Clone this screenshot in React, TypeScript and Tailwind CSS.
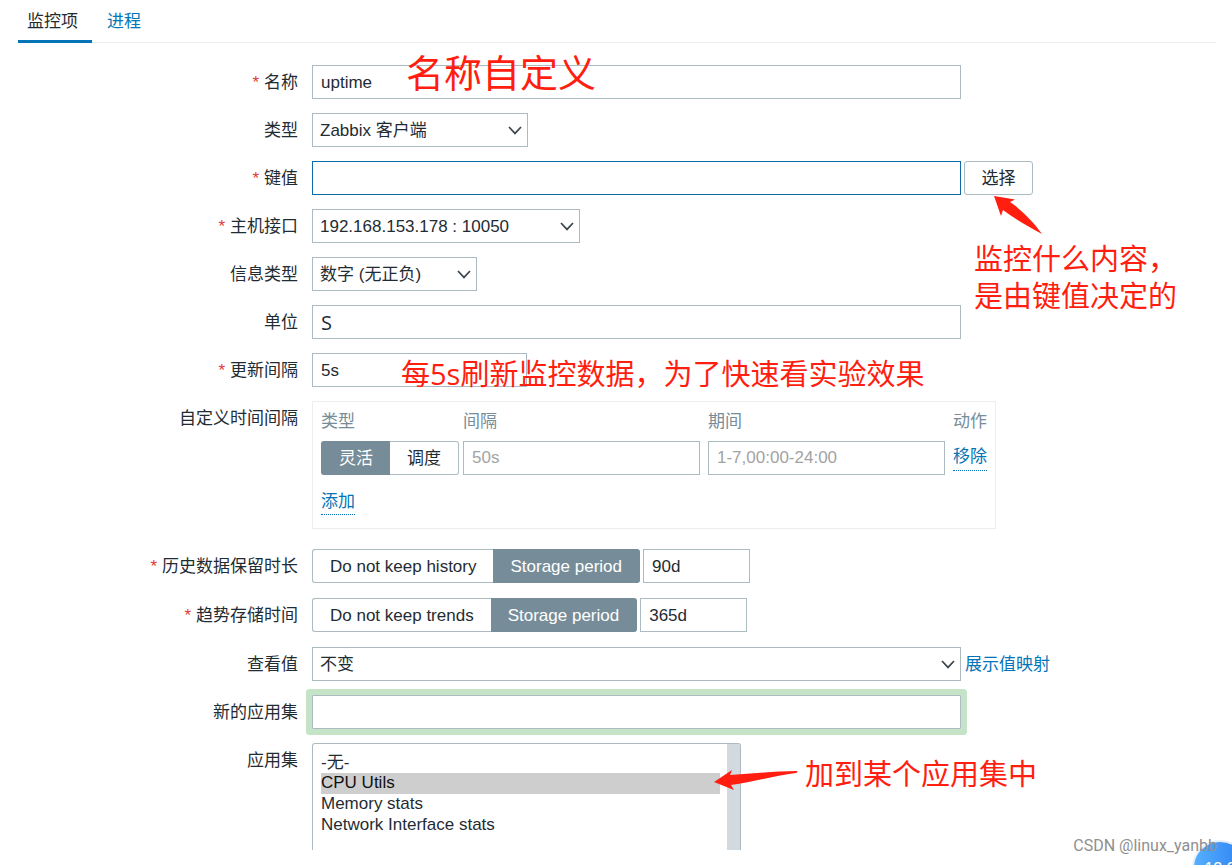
import type { ReactNode } from "react";
import clsx from "clsx";

const inputClass =
  "h-[34px] border border-[#acbbc2] bg-white px-2 pt-px text-[17px] text-[#1f2c33] placeholder:text-[#a3a3a3] outline-none";

const linkClass = "text-[#0275b8]";

interface RowProps {
  label: string;
  htmlFor?: string;
  required?: boolean;
  className?: string;
  children: ReactNode;
}

function Row({ label, htmlFor, required, className, children }: RowProps) {
  return (
    <div className={clsx("flex items-start gap-[14px]", className)}>
      <label htmlFor={htmlFor} className="h-[34px] w-[298px] shrink-0 text-right leading-[36px]">
        {required && <span className="mr-[5px] text-[#e33734]">*</span>}
        {label}
      </label>
      <div className="relative flex min-w-0 flex-1 items-center">{children}</div>
    </div>
  );
}

function Select({ id, options, className }: { id: string; options: string[]; className: string }) {
  return (
    <div className={clsx("relative", className)}>
      <select
        id={id}
        className="h-[34px] w-full appearance-none border border-[#acbbc2] bg-white pt-[2px] pl-[7px] pr-8 text-[17px] text-[#1f2c33] outline-none"
      >
        {options.map((option) => (
          <option key={option}>{option}</option>
        ))}
      </select>
      <svg
        className="pointer-events-none absolute right-[6px] top-[13px] h-[9px] w-[14px]"
        viewBox="0 0 14 9"
        fill="none"
        stroke="#3c464c"
        strokeWidth="1.7"
      >
        <path d="M1 1l6 6.4L13 1" />
      </svg>
    </div>
  );
}

function Segmented({ name, options, active }: { name: string; options: string[]; active: number }) {
  return (
    <div className="flex h-[34px]">
      {options.map((option, index) => (
        <label
          key={option}
          className="cursor-pointer border border-[#acbbc2] px-[17px] leading-[34px] whitespace-nowrap first:rounded-l-[3px] first:border-r-0 last:rounded-r-[3px] last:border-l-0 has-checked:border-[#768d99] has-checked:bg-[#768d99] has-checked:text-white"
        >
          <input type="radio" name={name} defaultChecked={index === active} className="sr-only" />
          {option}
        </label>
      ))}
    </div>
  );
}

function Note({ className, children }: { className: string; children: ReactNode }) {
  return (
    <p
      className={clsx(
        "pointer-events-none absolute z-10 font-['Open_Sans','Noto_Sans_CJK_SC',sans-serif] whitespace-nowrap text-[#ff1e10]",
        className
      )}
    >
      {children}
    </p>
  );
}

export default function App() {
  return (
    <div className="relative min-h-screen overflow-hidden bg-white font-['Liberation_Sans','Noto_Sans_CJK_SC',sans-serif] text-[17px] text-[#1f2c33]">
      <nav className="mr-4 ml-[18px] flex h-[43px] border-b border-[#ebeef0]">
        <a href="#item" className="-mb-px h-[43px] border-b-[3px] border-[#0275b8] pr-[14px] pl-[9px] leading-[44px]">
          监控项
        </a>
        <a href="#process" className={clsx("ml-[15px] leading-[44px]", linkClass)}>
          进程
        </a>
      </nav>

      <form className="mt-[22px] flex flex-col gap-[14px]">
        <Row label="名称" htmlFor="name" required>
          <input id="name" defaultValue="uptime" className={clsx(inputClass, "w-full max-w-[649px]")} />
          <Note className="-top-[17px] left-[94px] text-[38px] leading-[48px]">名称自定义</Note>
        </Row>

        <Row label="类型" htmlFor="type">
          <Select id="type" options={["Zabbix 客户端"]} className="w-[216px]" />
        </Row>

        <Row label="键值" htmlFor="key" required>
          <input id="key" className="h-[34px] w-full max-w-[649px] border border-[#0f6ba8] bg-white px-2 outline-none" />
          <div className="relative ml-[3px] shrink-0">
            <button type="button" className="h-[34px] w-[69px] rounded-[3px] border border-[#acbbc2] bg-white pt-[2px]">
              选择
            </button>
            <svg className="absolute top-[34px] left-[29px] h-[40px] w-[50px]" viewBox="0 0 50 40" fill="#ff1e10">
              <path d="M1 1L22 4.500L17 7C26 13 40 26 49 39C36 32 22 24 10 15L8 21Z" />
            </svg>
            <Note className="top-[79px] left-[10px] text-[29px] leading-[37px]">
              监控什么内容，
              <br />
              是由键值决定的
            </Note>
          </div>
        </Row>

        <Row label="主机接口" htmlFor="interface" required>
          <Select id="interface" options={["192.168.153.178 : 10050"]} className="w-[268px]" />
        </Row>

        <Row label="信息类型" htmlFor="value-type">
          <Select id="value-type" options={["数字 (无正负)"]} className="w-[165px]" />
        </Row>

        <Row label="单位" htmlFor="units">
          <input
            id="units"
            defaultValue="S"
            className="h-[34px] w-full max-w-[649px] border border-[#acbbc2] bg-white px-2 font-['Open_Sans',sans-serif] text-[20px] outline-none"
          />
        </Row>

        <Row label="更新间隔" htmlFor="delay" required>
          <input id="delay" defaultValue="5s" className={clsx(inputClass, "w-[215px]")} />
          <Note className="top-[2px] left-[89px] text-[29px] leading-[37px]">
            每5s刷新监控数据，为了快速看实验效果
          </Note>
        </Row>

        <Row label="自定义时间间隔" className="mb-[6px]">
          <div className="h-[128px] border border-[#ebeef0] px-2 pt-[5px]">
            <table>
              <thead>
                <tr className="h-[26px] text-left text-[#768d99]">
                  <th className="pt-[2px] pr-1 font-normal">类型</th>
                  <th className="pt-[2px] pr-2 font-normal">间隔</th>
                  <th className="pt-[2px] pr-2 font-normal">期间</th>
                  <th className="pt-[2px] font-normal">动作</th>
                </tr>
              </thead>
              <tbody>
                <tr className="h-[46px]">
                  <td className="pr-1">
                    <Segmented name="interval-type" options={["灵活", "调度"]} active={0} />
                  </td>
                  <td className="pr-2">
                    <input aria-label="间隔" placeholder="50s" className={clsx(inputClass, "block w-[237px]")} />
                  </td>
                  <td className="pr-2">
                    <input
                      aria-label="期间"
                      placeholder="1-7,00:00-24:00"
                      className={clsx(inputClass, "block w-[237px]")}
                    />
                  </td>
                  <td>
                    <button type="button" className={clsx("border-b border-dotted border-[#0275b8]", linkClass)}>
                      移除
                    </button>
                  </td>
                </tr>
              </tbody>
            </table>
            <button type="button" className={clsx("mt-2 border-b border-dotted border-[#0275b8]", linkClass)}>
              添加
            </button>
          </div>
        </Row>

        <Row label="历史数据保留时长" required>
          <Segmented name="history" options={["Do not keep history", "Storage period"]} active={1} />
          <input aria-label="历史数据保留时长" defaultValue="90d" className={clsx(inputClass, "ml-[3px] w-[107px]")} />
        </Row>

        <Row label="趋势存储时间" required className="mt-px">
          <Segmented name="trends" options={["Do not keep trends", "Storage period"]} active={1} />
          <input aria-label="趋势存储时间" defaultValue="365d" className={clsx(inputClass, "ml-[3px] w-[107px]")} />
        </Row>

        <Row label="查看值" htmlFor="valuemap" className="mt-px">
          <Select id="valuemap" options={["不变"]} className="w-full max-w-[649px]" />
          <a href="#valuemap" className={clsx("ml-1 shrink-0 pt-[2px]", linkClass)}>
            展示值映射
          </a>
        </Row>

        <Row label="新的应用集" htmlFor="new-application">
          <input
            id="new-application"
            className={clsx(inputClass, "w-full max-w-[649px] rounded-[1px] ring-6 ring-[#c5e3c6]")}
          />
        </Row>

        <Row label="应用集" htmlFor="applications">
          <div className="flex h-[107px] w-[429px] overflow-hidden rounded-t-[3px] border border-b-0 border-[#acbbc2]">
            <select
              id="applications"
              multiple
              defaultValue={["CPU Utils"]}
              className="mr-[7px] ml-2 h-[106px] flex-1 overflow-hidden bg-white pt-1 text-[17px] outline-none"
            >
              {["-无-", "CPU Utils", "Memory stats", "Network Interface stats"].map((option) => (
                <option key={option} className="h-[21px] min-h-[21px] p-0 leading-[21px] first:h-[25px]">
                  {option}
                </option>
              ))}
            </select>
            <div className="w-[13px] bg-[#d2dae0]" />
          </div>
          <svg className="absolute top-[26px] left-[402px] h-[22px] w-[84px]" viewBox="0 0 84 22" fill="#ff1e10">
            <path d="M0 13L18 1L16 6C38 5 60 2 83 2C84 3 83 4 82 4C60 7 38 13 17 16L20 21Z" />
          </svg>
          <Note className="top-3 left-[493px] text-[29px] leading-[37px]">加到某个应用集中</Note>
        </Row>
      </form>

      {/* floating clock bubble, mostly below the fold */}
      <div className="absolute -right-4 -bottom-[31px] h-[56px] w-[56px] rounded-full border-2 border-[#e6eef8] bg-linear-to-r from-[#55b0ff] to-[#2f7ff0] pt-[19px] text-center text-[16px] leading-[16px] text-white">
        12:2
      </div>
      <p className="absolute right-[15px] bottom-[9px] font-['Roboto',sans-serif] text-[16px] leading-5 text-[#8f8f8f]">
        CSDN @linux_yanbb
      </p>
    </div>
  );
}
